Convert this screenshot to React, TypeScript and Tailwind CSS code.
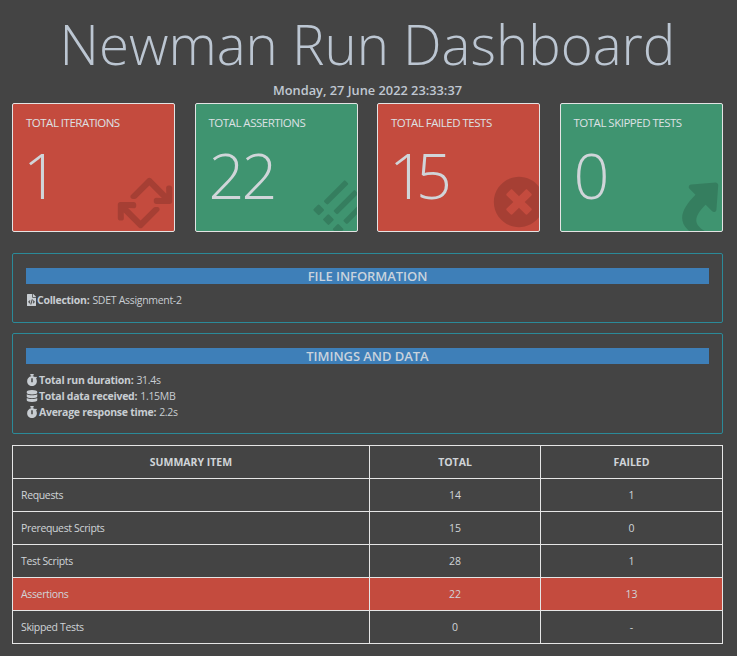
import { FaRetweet, FaList, FaTimesCircle, FaShare, FaFileCode, FaStopwatch, FaDatabase } from "react-icons/fa";
import type { ReactNode } from "react";

const font = { fontFamily: '"Open Sans", "Noto Sans", sans-serif' };

function Card({ title, value, red, valueClass, children }: { title: string; value: string; red?: boolean; valueClass: string; children: ReactNode }) {
  return (
    <div className={`relative overflow-hidden h-[129px] rounded-[2px] border border-[#e4e4e4] px-[13px] pt-[11px] ${red ? "bg-[#c44b3e]" : "bg-[#3f9470]"}`}>
      <div className="text-[11.5px] leading-[16px] text-[#dde1e4] tracking-[-0.5px]">{title}</div>
      <div className={`mt-[9px] text-[63px] leading-[70px] font-light text-[#d0d5d9] ${valueClass}`}>{value}</div>
      {children}
    </div>
  );
}

function Panel({ title, children }: { title: string; children: ReactNode }) {
  return (
    <div className="h-full rounded-[2px] border border-[#2b8a99] px-[13px] pt-[14px]">
      <div className="bg-[#3e7fb8] h-[16px] text-center text-[13px] leading-[16px] font-semibold text-[#c9d3dd] tracking-[-0.05px]">{title}</div>
      <div className="pt-[8px] text-[10.5px] leading-[16px] text-[#c8cdd2]">{children}</div>
    </div>
  );
}

function Info({ icon, label, value, iconClass }: { icon: ReactNode; label: string; value: string; iconClass: string }) {
  return (
    <div className="flex items-center">
      <span className={`flex text-[#c8cdd2] text-[12px] ${iconClass}`}>{icon}</span>
      <b className="font-bold text-[#c8cdd2] tracking-[-0.27px]">{label}</b>
      <span className="ml-[3px] tracking-[-0.3px]">{value}</span>
    </div>
  );
}

const rows: [string, string, string, boolean?][] = [
  ["Requests", "14", "1"],
  ["Prerequest Scripts", "15", "0"],
  ["Test Scripts", "28", "1"],
  ["Assertions", "22", "13", true],
  ["Skipped Tests", "0", "-"],
];

export default function App() {
  return (
    <div className="bg-[#444444] w-[737px] h-[656px] overflow-hidden pl-[12px] pr-[14px]" style={font}>
      <h1 className="text-center text-[54.6px] leading-[62px] pt-[13px] h-[75px] font-light text-[#bcc6d2]">Newman Run Dashboard</h1>
      <div className="text-center text-[12.8px] leading-[16px] font-semibold text-[#c0c8d2] mt-[7px]">Monday, 27 June 2022 23:33:37</div>
      <div className="mt-[5px] grid grid-cols-[163px_163px_163px_163px] gap-x-[19.5px]">
        <Card title="TOTAL ITERATIONS" value="1" red valueClass="-ml-[3px]">
          <FaRetweet className="absolute left-[101px] top-[68px] w-[62px] h-[62px] -rotate-45 text-black/15" />
        </Card>
        <Card title="TOTAL ASSERTIONS" value="22" valueClass="tracking-[-3px]">
          <FaList className="absolute left-[123px] top-[81px] w-[44px] h-[44px] -rotate-45 text-black/15" />
        </Card>
        <Card title="TOTAL FAILED TESTS" value="15" red valueClass="-ml-[2px] tracking-[-9px]">
          <FaTimesCircle className="absolute left-[115px] top-[72px] w-[52px] h-[52px] text-black/15" />
        </Card>
        <Card title="TOTAL SKIPPED TESTS" value="0" valueClass="tracking-[-3px]">
          <FaShare className="absolute left-[114px] top-[75px] w-[54px] h-[54px] -rotate-45 text-black/15" />
        </Card>
      </div>
      <div className="mt-[21px] flex flex-col gap-[10px]">
        <div className="h-[70px]">
          <Panel title="FILE INFORMATION">
            <Info icon={<FaFileCode />} iconClass="w-[11px]" label="Collection:" value="SDET Assignment-2" />
          </Panel>
        </div>
        <div className="h-[101px]">
          <Panel title="TIMINGS AND DATA">
            <Info icon={<FaStopwatch />} iconClass="w-[13px]" label="Total run duration:" value="31.4s" />
            <Info icon={<FaDatabase />} iconClass="w-[13px]" label="Total data received:" value="1.15MB" />
            <Info icon={<FaStopwatch />} iconClass="w-[13px]" label="Average response time:" value="2.2s" />
          </Panel>
        </div>
      </div>
      <table className="mt-[11px] w-[710px] table-fixed border-collapse text-[10.5px] text-[#d0d4d8]">
        <colgroup>
          <col className="w-[357px]" />
          <col className="w-[171px]" />
          <col className="w-[182px]" />
        </colgroup>
        <thead>
          <tr className="h-[33px]">
            {["SUMMARY ITEM", "TOTAL", "FAILED"].map((h) => (
              <th key={h} className="border border-[#e6e6e6] pt-[1px] font-bold text-center text-[#d0d4d8]">{h}</th>
            ))}
          </tr>
        </thead>
        <tbody>
          {rows.map(([a, b, c, red]) => (
            <tr key={a} className={`h-[33px] ${red ? "bg-[#c44b3e]" : ""}`}>
              <td className="border border-[#e6e6e6] px-[8px] pt-[1px] tracking-[-0.35px]">{a}</td>
              <td className="border border-[#e6e6e6] pt-[1px] text-center">{b}</td>
              <td className="border border-[#e6e6e6] pt-[1px] text-center">{c}</td>
            </tr>
          ))}
        </tbody>
      </table>
    </div>
  );
}
